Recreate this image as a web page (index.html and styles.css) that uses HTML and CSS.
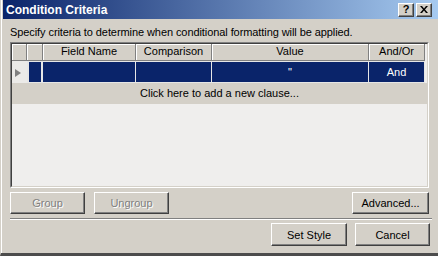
FILE: index.html
```html
<!DOCTYPE html>
<html lang="en">
<head>
    <meta charset="UTF-8">
    <title>Condition Criteria</title>
    <link rel="stylesheet" href="styles.css">
</head>
<body>
    <div class="window">
        <div class="titlebar">
            <span class="title">Condition Criteria</span>
            <div class="caption-buttons">
                <button class="cap-btn">?</button>
                <button class="cap-btn">
                    <svg width="8" height="7" viewBox="0 0 8 7"><path d="M0 0h2l2 2.5L6 0h2L5 3.5 8 7H6L4 4.5 2 7H0l3-3.5z" fill="#000"/></svg>
                </button>
            </div>
        </div>
        <div class="content">
            <p class="intro">Specify criteria to determine when conditional formatting will be applied.</p>
            <div class="grid">
                <div class="grid-inner">
                    <div class="row head">
                        <div class="cell c-sel"></div>
                        <div class="cell c-grp"></div>
                        <div class="cell c-field">Field Name</div>
                        <div class="cell c-comp">Comparison</div>
                        <div class="cell c-value">Value</div>
                        <div class="cell c-andor">And/Or</div>
                    </div>
                    <div class="row data">
                        <div class="cell c-sel"><span class="arrow"></span></div>
                        <div class="cell c-grp"></div>
                        <div class="cell c-field"></div>
                        <div class="cell c-comp"></div>
                        <div class="cell c-value">"</div>
                        <div class="cell c-andor">And</div>
                    </div>
                    <div class="add-row">Click here to add a new clause...</div>
                </div>
            </div>
            <div class="actions">
                <button class="btn" disabled>Group</button>
                <button class="btn ungroup" disabled>Ungroup</button>
                <button class="btn advanced">Advanced...</button>
            </div>
            <div class="separator"></div>
            <div class="footer">
                <button class="btn set-style">Set Style</button>
                <button class="btn">Cancel</button>
            </div>
        </div>
    </div>
</body>
</html>
```

FILE: styles.css
```css
* {
    box-sizing: border-box;
}
body {
    margin: 0;
    font-family: "Liberation Sans", Arial, sans-serif;
    font-size: 11px;
    color: #000;
    background: #d4d0c8;
}
.window {
    width: 438px;
    height: 256px;
    background: #d4d0c8;
    border-left: 1px solid #d4d0c8;
    box-shadow: inset 1px 0 #fff;
    border-bottom: 3px solid #4c4c4c;
    overflow: hidden;
}
.titlebar {
    height: 19px;
    margin-left: 2px;
    padding: 0 6px 0 3px;
    display: flex;
    align-items: center;
    justify-content: space-between;
    background: linear-gradient(to right, #0a246a, #a6caf0);
}
.title {
    color: #fff;
    font-weight: bold;
    font-size: 12px;
}
.caption-buttons {
    display: flex;
    gap: 2px;
}
.cap-btn {
    width: 16px;
    height: 14px;
    padding: 0;
    display: flex;
    align-items: center;
    justify-content: center;
    background: #d4d0c8;
    border: 1px solid;
    border-color: #fff #404040 #404040 #fff;
    box-shadow: inset -1px -1px #808080;
    font-family: "Liberation Sans", Arial, sans-serif;
    font-weight: bold;
    font-size: 11px;
    line-height: 1;
}
.content {
    padding: 0 9px 0 9px;
}
.intro {
    margin: 0;
    padding-top: 6px;
    height: 23px;
    line-height: 15px;
    white-space: nowrap;
    letter-spacing: -0.08px;
}
.grid {
    height: 146px;
    border: 1px solid;
    border-color: #808080 #fff #fff #808080;
}
.grid-inner {
    height: 100%;
    border: 1px solid;
    border-color: #404040 #d4d0c8 #d4d0c8 #404040;
    background: #efeeed;
    display: flex;
    flex-direction: column;
}
.row {
    display: flex;
}
.cell {
    flex: none;
    text-align: center;
    white-space: nowrap;
}
.c-sel { width: 15px; }
.c-grp { width: 16px; }
.c-field { width: 93px; }
.c-comp { width: 76px; }
.c-value { width: 157px; }
.c-andor { width: 56px; }
.head .cell {
    height: 17px;
    line-height: 15px;
    background: #d4d0c8;
    border-right: 1px solid #808080;
    border-bottom: 1px solid #808080;
    box-shadow: inset 1px 1px #fff;
}
.data {
    height: 22px;
}
.data .cell {
    height: 22px;
    line-height: 20px;
    color: #fff;
    background: #0a246a;
    border: 1px solid #e6e6e6;
    border-left: none;
}
.data .c-sel {
    position: relative;
    background: #ebeae8;
    border-color: #ebeae8;
}
.data .c-grp {
    border-left: 1px solid #e6e6e6;
    border-width: 1px 2px 1px 2px;
}
.arrow {
    position: absolute;
    left: 3px;
    top: 7px;
    border-left: 6px solid #808080;
    border-top: 4px solid transparent;
    border-bottom: 4px solid transparent;
}
.add-row {
    height: 21px;
    line-height: 21px;
    text-align: center;
    background: #d4d0c8;
}
.btn {
    height: 22px;
    padding: 0;
    font-family: "Liberation Sans", Arial, sans-serif;
    font-size: 11px;
    color: #000;
    background: #d4d0c8;
    border: 1px solid;
    border-color: #fff #404040 #404040 #fff;
    box-shadow: inset -1px -1px #808080;
    width: 75px;
}
.btn:disabled {
    color: #808080;
    text-shadow: 1px 1px #fff;
}
.actions {
    display: flex;
    margin-top: 4px;
}
.ungroup {
    margin-left: 9px;
}
.advanced {
    margin-left: auto;
    width: 77px;
}
.separator {
    margin: 4px -3px 0 0;
    height: 2px;
    border-top: 1px solid #808080;
    border-bottom: 1px solid #fff;
}
.footer {
    display: flex;
    justify-content: flex-end;
    gap: 8px;
    margin-top: 3px;
    margin-right: -1px;
}
.footer .btn {
    height: 23px;
}
.set-style {
    width: 76px;
}
```
